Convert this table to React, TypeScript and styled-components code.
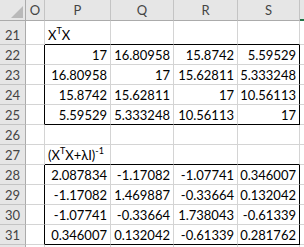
import React from 'react'
import styled, { createGlobalStyle } from 'styled-components'

//=> Data
type Row = {
	n?: number
	h: number
	label?: React.ReactNode
	values?: string[]
	top?: boolean
	bottom?: boolean
	boxed?: boolean
}

const rows: Row[] = [
	{ n: 21, h: 24, top: true, label: <>X<sup>T</sup>X</> },
	{ n: 22, h: 20, boxed: true, values: ['17', '16.80958', '15.8742', '5.59529'] },
	{ n: 23, h: 20, boxed: true, values: ['16.80958', '17', '15.62811', '5.333248'] },
	{ n: 24, h: 20, boxed: true, values: ['15.8742', '15.62811', '17', '10.56113'] },
	{ n: 25, h: 20, boxed: true, bottom: true, values: ['5.59529', '5.333248', '10.56113', '17'] },
	{ n: 26, h: 20 },
	{ n: 27, h: 20, top: true, label: <>(X<sup>T</sup>X+λI)<sup>-1</sup></> },
	{ n: 28, h: 20, boxed: true, values: ['2.087834', '-1.17082', '-1.07741', '0.346007'] },
	{ n: 29, h: 20, boxed: true, values: ['-1.17082', '1.469887', '-0.33664', '0.132042'] },
	{ n: 30, h: 20, boxed: true, values: ['-1.07741', '-0.33664', '1.738043', '-0.61339'] },
	{ n: 31, h: 20, boxed: true, bottom: true, values: ['0.346007', '0.132042', '-0.61339', '0.281762'] },
	{ h: 20 },
]

const letters = ['O', 'P', 'Q', 'R', 'S', '']

//=> DOM
export default () => (
	<>
		<Global />
		<Sheet $rows={rows.map((r) => `${r.h}px`).join(' ')}>
			<Corner>
				<svg width='12' height='12' viewBox='0 0 12 12'>
					<polygon points='12,0 12,12 0,12' fill='#b9b9b9' />
				</svg>
			</Corner>
			{letters.map((l, i) => (
				<ColHead key={l + i} $active={l === ''}>
					{l}
				</ColHead>
			))}

			{rows.map((r, i) => (
				<React.Fragment key={i}>
					<RowHead>{r.n}</RowHead>
					<Cell $rb={r.boxed} />
					{[0, 1, 2, 3].map((c) => (
						<Cell
							key={c}
							$left={c === 0 && !!r.label}
							$rb={r.boxed && c === 3}
							$bb={r.top || r.bottom}
						>
							{c === 0 && r.label && <Label>{r.label}</Label>}
							{r.values?.[c]}
						</Cell>
					))}
					<Cell />
				</React.Fragment>
			))}
		</Sheet>
	</>
)

//=> Style
const Global = createGlobalStyle`
	html, body {
		margin: 0;
		padding: 0;
		background: #fff;
		overflow: hidden;
	}
	body {
		font-family: Lato, 'Liberation Sans', sans-serif;
	}
`

const Sheet = styled.div<{ $rows: string }>`
	display: grid;
	grid-template-columns: 26px 19px 66px 63px 64px 62px 1fr;
	grid-template-rows: 21px ${(p) => p.$rows};
	width: 304px;
	height: 247px;
	overflow: hidden;
`

const Corner = styled.div`
	background: #e6e6e6;
	border-right: 1px solid #ababab;
	border-bottom: 1px solid #ababab;
	display: flex;
	align-items: flex-end;
	justify-content: flex-end;
	padding: 0 2px 2px 0;
`

const ColHead = styled.div<{ $active?: boolean }>`
	background: #e6e6e6;
	border-right: 1px solid #c4c4c4;
	border-bottom: ${(p) => (p.$active ? '2px solid #217346' : '1px solid #ababab')};
	display: flex;
	align-items: center;
	justify-content: center;
	font-size: 13px;
	color: #444;
`

const RowHead = styled.div`
	background: #e6e6e6;
	border-right: 1px solid #ababab;
	border-bottom: 1px solid #c4c4c4;
	display: flex;
	align-items: flex-end;
	justify-content: center;
	padding-bottom: 1px;
	font-size: 13px;
	color: #444;
`

const Cell = styled.div<{ $left?: boolean; $rb?: boolean; $bb?: boolean }>`
	display: flex;
	align-items: flex-end;
	justify-content: ${(p) => (p.$left ? 'flex-start' : 'flex-end')};
	padding: 0 3px 1px;
	border-right: 1px solid ${(p) => (p.$rb ? '#000' : '#d4d4d4')};
	border-bottom: 1px solid ${(p) => (p.$bb ? '#000' : '#d4d4d4')};
	font-size: 13px;
	color: #000;
	white-space: nowrap;
	min-width: 0;
`

const Label = styled.span`
	line-height: 15px;

	sup {
		font-size: 9px;
		line-height: 0;
		vertical-align: 6px;
	}
`
